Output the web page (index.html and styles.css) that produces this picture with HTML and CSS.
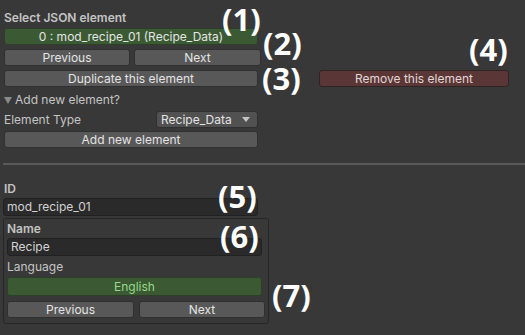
FILE: index.html
```html
<!DOCTYPE html>
<html>
<head>
<meta charset="utf-8">
<link rel="stylesheet" href="styles.css">
</head>
<body>
<div class="panel">
  <div class="label bold">Select JSON element</div>
  <div class="btn green w254">0 : mod_recipe_01 (Recipe_Data)</div>
  <div class="row pair">
    <div class="btn w126">Previous</div>
    <div class="btn w127">Next</div>
  </div>
  <div class="row dup">
    <div class="btn w254">Duplicate this element</div>
    <div class="btn remove">Remove this element</div>
  </div>
  <div class="foldout"><span class="tri"></span>Add new element?</div>
  <div class="row field-row">
    <div class="label">Element Type</div>
    <div class="dropdown"><span>Recipe_Data</span><span class="arrow"></span></div>
  </div>
  <div class="btn w254 add">Add new element</div>
  <div class="sep"></div>
  <div class="label bold id-label">ID</div>
  <div class="textfield idfield">mod_recipe_01</div>
  <div class="frame">
    <div class="label bold">Name</div>
    <div class="textfield inner">Recipe</div>
    <div class="label lang">Language</div>
    <div class="btn green inner english">English</div>
    <div class="row pair2">
      <div class="btn w127">Previous</div>
      <div class="btn w126">Next</div>
    </div>
  </div>
</div>
<div class="tag t1">(1)</div>
<div class="tag t2">(2)</div>
<div class="tag t3">(3)</div>
<div class="tag t4">(4)</div>
<div class="tag t5">(5)</div>
<div class="tag t6">(6)</div>
<div class="tag t7">(7)</div>
</body>
</html>
```
FILE: styles.css
```css
html, body {
  margin: 0;
  padding: 0;
  background: #383838;
  width: 525px;
  height: 335px;
  overflow: hidden;
}
body {
  font-family: Inter, "Noto Sans", sans-serif;
  font-size: 12px;
  color: #c4c4c4;
  position: relative;
}
.panel {
  padding: 10px 0 0 4px;
}
.label {
  height: 16px;
  line-height: 16px;
  color: #c4c4c4;
  white-space: nowrap;
}
.bold {
  font-weight: 600;
}
.btn {
  box-sizing: border-box;
  height: 17px;
  line-height: 15px;
  text-align: center;
  background: #585858;
  border: 1px solid #303030;
  border-radius: 3px;
  color: #e4e4e4;
  white-space: nowrap;
}
.green {
  background: #3b5a33;
  border-color: #2c3f28;
  margin-top: 2px;
}
.w254 { width: 254px; }
.w126 { width: 126px; }
.w127 { width: 127px; }
.row {
  display: flex;
}
.pair {
  margin-top: 4px;
  gap: 4px;
}
.dup {
  margin-top: 4px;
  gap: 61px;
}
.remove {
  width: 190px;
  background: #5a3636;
  border-color: #2e2424;
  color: #e2d6d6;
}
.foldout {
  margin-top: 5px;
  height: 16px;
  line-height: 16px;
  display: flex;
  align-items: center;
  margin-left: -1px;
  color: #c4c4c4;
}
.tri {
  width: 0;
  height: 0;
  border-left: 4px solid transparent;
  border-right: 4px solid transparent;
  border-top: 7px solid #8a8a8a;
  margin: 0 3px 0 1px;
}
.field-row {
  margin-top: 3px;
  height: 17px;
  align-items: center;
  justify-content: space-between;
  width: 254px;
}
.dropdown {
  box-sizing: border-box;
  width: 102px;
  height: 17px;
  background: #515151;
  border: 1px solid #303030;
  border-radius: 3px;
  color: #e4e4e4;
  display: flex;
  align-items: center;
  justify-content: space-between;
  padding: 0 7px 0 4px;
  line-height: 15px;
}
.arrow {
  width: 0;
  height: 0;
  border-left: 4px solid transparent;
  border-right: 4px solid transparent;
  border-top: 5px solid #c4c4c4;
}
.add {
  margin-top: 3px;
}
.sep {
  margin: 15px 0 0 -1px;
  height: 2px;
  background: #5a5a5a;
}
.id-label {
  margin-top: 16px;
}
.textfield {
  box-sizing: border-box;
  height: 18px;
  line-height: 16px;
  background: #2a2a2a;
  border: 1px solid #212121;
  border-radius: 3px;
  color: #d2d2d2;
  padding-left: 3px;
}
.idfield {
  margin: 1px 0 0 -1px;
  width: 255px;
}
.frame {
  box-sizing: border-box;
  margin: 2px 0 0 -1px;
  width: 266px;
  height: 106px;
  border: 1px solid #262626;
  border-radius: 3px;
  padding: 2px 0 0 3px;
}
.textfield.inner {
  width: 255px;
  margin-top: 1px;
}
.lang {
  margin-top: 3px;
}
.btn.inner {
  width: 255px;
}
.english {
  height: 19px;
  line-height: 17px;
  margin-top: 2px;
  color: #96d88a;
}
.pair2 {
  margin-top: 5px;
  gap: 5px;
}
.tag {
  position: absolute;
  font-family: "Open Sans", "Noto Sans", sans-serif;
  font-weight: 700;
  font-size: 31px;
  line-height: 34px;
  color: #ffffff;
  white-space: nowrap;
}
.t1 { left: 222px; top: 2px; }
.t2 { left: 263px; top: 26px; }
.t3 { left: 262px; top: 61px; }
.t4 { left: 469px; top: 32px; }
.t5 { left: 218px; top: 179px; }
.t6 { left: 220px; top: 219px; }
.t7 { left: 272px; top: 278px; }
```
